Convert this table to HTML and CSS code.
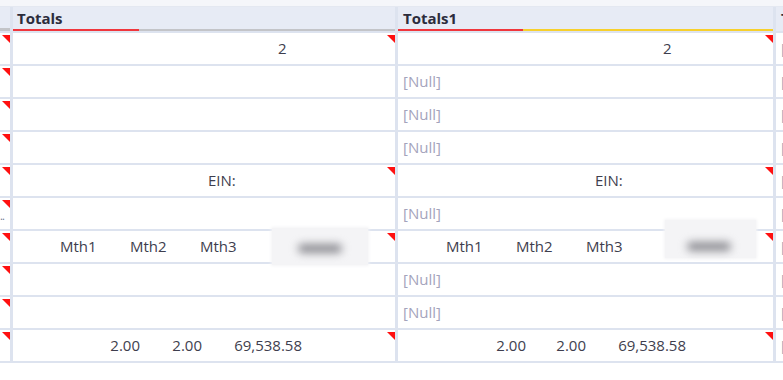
FILE: index.html
```html
<!DOCTYPE html>
<html>
<head>
<meta charset="utf-8">
<link rel="stylesheet" href="styles.css">
</head>
<body>
<div class="top-strip"></div>
<div class="sheet">
  <!-- header -->
  <div class="hd"><div class="hd-label"></div><div class="uline"><span class="u-gray u-full"></span></div></div>
  <div class="hd"><div class="hd-label">Totals</div><div class="uline"><span class="u-red"></span><span class="u-gray"></span></div></div>
  <div class="hd"><div class="hd-label">Totals1</div><div class="uline"><span class="u-red"></span><span class="u-yellow"></span></div></div>
  <div class="hd"><div class="hd-label">T</div><div class="uline"></div></div>

  <!-- row 1 -->
  <div class="cell mark"></div>
  <div class="cell mark"><span class="v-count">2</span></div>
  <div class="cell mark"><span class="v-count">2</span></div>
  <div class="cell"><span class="null">[Null]</span></div>
  <!-- row 2 -->
  <div class="cell mark"></div>
  <div class="cell"></div>
  <div class="cell"><span class="null">[Null]</span></div>
  <div class="cell"><span class="null">[Null]</span></div>
  <!-- row 3 -->
  <div class="cell mark"></div>
  <div class="cell"></div>
  <div class="cell"><span class="null">[Null]</span></div>
  <div class="cell"><span class="null">[Null]</span></div>
  <!-- row 4 -->
  <div class="cell mark"></div>
  <div class="cell"></div>
  <div class="cell"><span class="null">[Null]</span></div>
  <div class="cell"><span class="null">[Null]</span></div>
  <!-- row 5 -->
  <div class="cell mark"></div>
  <div class="cell mark"><span class="v-ein">EIN:</span></div>
  <div class="cell mark"><span class="v-ein v-ein2">EIN:</span></div>
  <div class="cell"><span class="null">[Null]</span></div>
  <!-- row 6 -->
  <div class="cell mark"><span class="dots">..</span></div>
  <div class="cell"></div>
  <div class="cell"><span class="null">[Null]</span></div>
  <div class="cell"><span class="null">[Null]</span></div>
  <!-- row 7 -->
  <div class="cell mark"></div>
  <div class="cell mark">
    <div class="months"><span>Mth1</span><span>Mth2</span><span>Mth3</span></div>
    <div class="redact redact-a"><span class="blob"></span></div>
  </div>
  <div class="cell mark">
    <div class="months months2"><span>Mth1</span><span>Mth2</span><span>Mth3</span></div>
    <div class="redact redact-b"><span class="blob"></span></div>
  </div>
  <div class="cell"><span class="null">[Null]</span></div>
  <!-- row 8 -->
  <div class="cell mark"></div>
  <div class="cell"></div>
  <div class="cell"><span class="null">[Null]</span></div>
  <div class="cell"><span class="null">[Null]</span></div>
  <!-- row 9 -->
  <div class="cell mark"></div>
  <div class="cell"></div>
  <div class="cell"><span class="null">[Null]</span></div>
  <div class="cell"><span class="null">[Null]</span></div>
  <!-- row 10 -->
  <div class="cell mark"></div>
  <div class="cell mark">
    <div class="amounts"><span class="a1">2.00</span><span class="a2">2.00</span><span class="a3">69,538.58</span></div>
  </div>
  <div class="cell mark">
    <div class="amounts amounts2"><span class="a1">2.00</span><span class="a2">2.00</span><span class="a3">69,538.58</span></div>
  </div>
  <div class="cell"><span class="null">[Null]</span></div>
</div>
</body>
</html>
```
FILE: styles.css
```css
html, body {
  margin: 0;
  padding: 0;
  background: #ffffff;
}
body {
  width: 783px;
  height: 380px;
  overflow: hidden;
  font-family: "Open Sans", "Noto Sans", sans-serif;
  font-size: 15px;
  color: #3e3e4e;
}
.top-strip {
  height: 6px;
  background: #f5f6fa;
  border-bottom: 1px solid #e4e8f1;
}
.sheet {
  display: grid;
  grid-template-columns: 10px 382px 375px 1fr;
  grid-template-rows: 24px repeat(10, 31px);
  column-gap: 3px;
  row-gap: 2px;
  background: #dde3ef;
  padding-bottom: 2px;
}
.hd {
  background: #e7ebf5;
  display: flex;
  flex-direction: column;
  overflow: hidden;
}
.hd-label {
  flex: 1;
  font-weight: 700;
  font-size: 15px;
  line-height: 22px;
  color: #2c2c3c;
  padding-left: 5px;
  white-space: nowrap;
}
.hd:nth-child(2) .hd-label { padding-left: 4px; }
.uline {
  height: 3px;
  display: flex;
}
.u-red { width: 126px; background: #f0363c; }
.hd:nth-child(3) .u-red { width: 125px; }
.u-gray { flex: 1; background: #c3c4c8; }
.u-yellow { flex: 1; background: #f7d02c; }
.cell {
  background: #ffffff;
  position: relative;
  line-height: 31px;
  white-space: nowrap;
  overflow: visible;
}
.sheet > .cell:nth-child(4n) { overflow: hidden; }
.mark::after {
  content: "";
  position: absolute;
  top: 2px;
  right: 0;
  width: 8px;
  height: 8px;
  background: #ff1010;
  clip-path: polygon(0 0, 100% 0, 100% 100%);
}
.null {
  padding-left: 5px;
  color: #a4a3bc;
}
.v-count { padding-left: 265px; }
.v-ein { padding-left: 195px; }
.v-ein2 { padding-left: 197px; }
.dots {
  color: #6a7590;
  font-size: 11px;
  letter-spacing: -1px;
  position: relative;
  top: 1px;
}
.months {
  display: flex;
  padding-left: 47px;
}
.months span { width: 70px; }
.months2 { padding-left: 48px; }
.amounts {
  display: flex;
  padding-left: 60px;
}
.amounts span { text-align: right; }
.amounts .a1 { width: 67px; }
.amounts .a2 { width: 62px; }
.amounts .a3 { width: 100px; }
.amounts2 { padding-left: 61px; }
.amounts2 .a2 { width: 60px; }
.redact {
  position: absolute;
  z-index: 2;
  background: #f4f4f6;
  box-shadow: 0 0 3px 1px #f4f4f6;
  display: flex;
  align-items: center;
  justify-content: center;
}
.redact-a { left: 259px; top: -3px; width: 96px; height: 37px; }
.redact-b { left: 267px; top: -11px; width: 91px; height: 38px; }
.blob {
  width: 44px;
  height: 9px;
  border-radius: 6px;
  background: #8c8c92;
  filter: blur(4px);
  margin-top: 4px;
}
.redact-b .blob { margin-top: 14px; margin-left: -4px; }
```
